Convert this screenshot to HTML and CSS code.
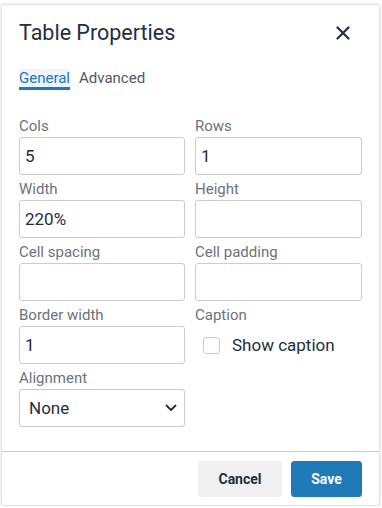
FILE: index.html
```html
<!DOCTYPE html>
<html>
<head>
<meta charset="utf-8">
<link rel="stylesheet" href="styles.css">
</head>
<body>
<div class="dialog">
  <div class="header">
    <div class="title">Table Properties</div>
    <button class="close" aria-label="Close">
      <svg width="14" height="14" viewBox="0 0 14 14"><path d="M1.5 1.5 L12.5 12.5 M12.5 1.5 L1.5 12.5" stroke="#222f3e" stroke-width="2.2" stroke-linecap="round"/></svg>
    </button>
  </div>
  <div class="tabs">
    <div class="tab active">General</div>
    <div class="tab">Advanced</div>
  </div>
  <div class="body">
    <div class="grid">
      <div class="field"><label>Cols</label><div class="input">5</div></div>
      <div class="field"><label>Rows</label><div class="input">1</div></div>
      <div class="field"><label>Width</label><div class="input">220%</div></div>
      <div class="field"><label>Height</label><div class="input"></div></div>
      <div class="field"><label>Cell spacing</label><div class="input"></div></div>
      <div class="field"><label>Cell padding</label><div class="input"></div></div>
      <div class="field"><label>Border width</label><div class="input">1</div></div>
      <div class="field"><label>Caption</label>
        <div class="check"><span class="box"></span><span class="check-label">Show caption</span></div>
      </div>
      <div class="field"><label>Alignment</label>
        <div class="input select"><span>None</span>
          <svg width="12" height="8" viewBox="0 0 12 8"><path d="M1.5 1.5 L6 6 L10.5 1.5" fill="none" stroke="#222f3e" stroke-width="1.8" stroke-linecap="round" stroke-linejoin="round"/></svg>
        </div>
      </div>
    </div>
  </div>
  <div class="footer">
    <button class="btn cancel">Cancel</button>
    <button class="btn save">Save</button>
  </div>
</div>
</body>
</html>
```
FILE: styles.css
```css
html, body {
  margin: 0;
  padding: 0;
  background: #ffffff;
}
body {
  font-family: Roboto, "Noto Sans", sans-serif;
  color: #222f3e;
}
.dialog {
  margin: 4px 0 0 1px;
  width: 377px;
  height: 500px;
  border: 1px solid #e2e2e2;
  border-radius: 3px;
  box-shadow: 0 0 4px rgba(0,0,0,0.12);
  display: flex;
  flex-direction: column;
  background: #fff;
}
.header {
  display: flex;
  justify-content: space-between;
  align-items: center;
  padding: 14px 29px 0 17px;
  height: 28px;
}
.title {
  font-size: 21.5px;
  line-height: 28px;
  color: #222f3e;
}
.close {
  border: 0;
  background: none;
  padding: 0;
  width: 14px;
  height: 14px;
  display: flex;
}
.tabs {
  display: flex;
  gap: 9px;
  padding: 0 17px;
  margin-top: 22px;
}
.tab {
  font-size: 15px;
  line-height: 18px;
  padding-bottom: 0;
  border-bottom: 3px solid transparent;
  color: #4f5965;
}
.tab.active {
  color: #207ab7;
  border-bottom-color: #207ab7;
  background: #eef4fa;
}
.body {
  flex: 1;
  padding: 28px 17px 0 17px;
}
.grid {
  display: grid;
  grid-template-columns: 166px 167px;
  column-gap: 10px;
  row-gap: 6px;
}
.field label {
  display: block;
  font-size: 15px;
  line-height: 17px;
  padding-bottom: 2px;
  color: #6d737b;
}
.input {
  box-sizing: border-box;
  height: 38px;
  border: 1px solid #cccccc;
  border-radius: 3px;
  padding: 0 5px;
  font-size: 17px;
  line-height: 36px;
  color: #222f3e;
}
.select {
  display: flex;
  justify-content: space-between;
  align-items: center;
  padding: 0 7px 0 9px;
}
.check {
  height: 38px;
  display: flex;
  align-items: center;
  padding-left: 8px;
}
.box {
  box-sizing: border-box;
  width: 17px;
  height: 17px;
  border: 1px solid #cccccc;
  border-radius: 3px;
  margin-right: 12px;
}
.check-label {
  font-size: 17px;
  color: #222f3e;
}
.footer {
  border-top: 1px solid #cccccc;
  display: flex;
  justify-content: flex-end;
  gap: 9px;
  padding: 9px 17px 8px 0;
}
.btn {
  height: 36px;
  border-radius: 3px;
  font-family: Roboto, "Noto Sans", sans-serif;
  font-size: 14px;
  font-weight: 700;
  cursor: pointer;
}
.cancel {
  width: 84px;
  background: #f0f0f0;
  border: 1px solid #f0f0f0;
  color: #222f3e;
}
.save {
  width: 71px;
  background: #207ab7;
  border: 1px solid #207ab7;
  color: #ffffff;
}
```
